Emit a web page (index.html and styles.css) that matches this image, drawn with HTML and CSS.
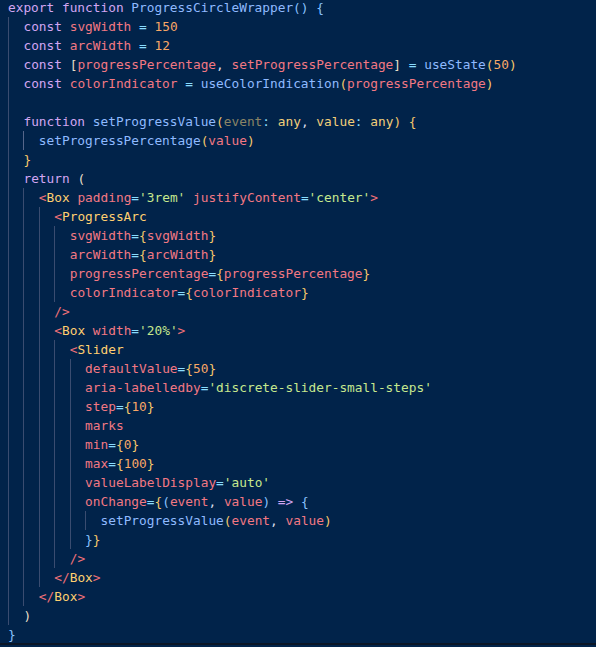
FILE: index.html
```html
<!DOCTYPE html>
<html>
<head>
<meta charset="utf-8">
<link rel="stylesheet" href="styles.css">
</head>
<body>
<div class="editor">
<div class="code">
<div class="line"><span class="k">export</span> <span class="k">function</span> <span class="f">ProgressCircleWrapper</span><span class="bl">()</span> <span class="bl">{</span></div>
<div class="line"><span class="i">  </span><span class="k">const</span> <span class="v">svgWidth</span> <span class="o">=</span> <span class="n">150</span></div>
<div class="line"><span class="i">  </span><span class="k">const</span> <span class="v">arcWidth</span> <span class="o">=</span> <span class="n">12</span></div>
<div class="line"><span class="i">  </span><span class="k">const</span> <span class="w">[</span><span class="v">progressPercentage</span><span class="d">,</span> <span class="v">setProgressPercentage</span><span class="w">]</span> <span class="o">=</span> <span class="f">useState</span><span class="g">(</span><span class="n">50</span><span class="g">)</span></div>
<div class="line"><span class="i">  </span><span class="k">const</span> <span class="v">colorIndicator</span> <span class="o">=</span> <span class="f">useColorIndication</span><span class="g">(</span><span class="v">progressPercentage</span><span class="g">)</span></div>
<div class="line"><span class="i">  </span></div>
<div class="line"><span class="i">  </span><span class="k">function</span> <span class="f">setProgressValue</span><span class="g">(</span><span class="pd">event</span><span class="o">:</span> <span class="ty">any</span><span class="d">,</span> <span class="ty">value</span><span class="o">:</span> <span class="ty">any</span><span class="g">)</span> <span class="g">{</span></div>
<div class="line"><span class="i">  </span><span class="i act">  </span><span class="f">setProgressPercentage</span><span class="g">(</span><span class="v">value</span><span class="g">)</span></div>
<div class="line"><span class="i">  </span><span class="g">}</span></div>
<div class="line"><span class="i">  </span><span class="k">return</span> <span class="w">(</span></div>
<div class="line"><span class="i">  </span><span class="i">  </span><span class="p">&lt;</span><span class="t">Box</span> <span class="v">padding</span><span class="o">=</span><span class="s">'3rem'</span> <span class="v">justifyContent</span><span class="o">=</span><span class="s">'center'</span><span class="p">&gt;</span></div>
<div class="line"><span class="i">  </span><span class="i">  </span><span class="i">  </span><span class="p">&lt;</span><span class="t">ProgressArc</span></div>
<div class="line"><span class="i">  </span><span class="i">  </span><span class="i">  </span><span class="i">  </span><span class="v">svgWidth</span><span class="o">=</span><span class="g">{</span><span class="v">svgWidth</span><span class="g">}</span></div>
<div class="line"><span class="i">  </span><span class="i">  </span><span class="i">  </span><span class="i">  </span><span class="v">arcWidth</span><span class="o">=</span><span class="g">{</span><span class="v">arcWidth</span><span class="g">}</span></div>
<div class="line"><span class="i">  </span><span class="i">  </span><span class="i">  </span><span class="i">  </span><span class="v">progressPercentage</span><span class="o">=</span><span class="g">{</span><span class="v">progressPercentage</span><span class="g">}</span></div>
<div class="line"><span class="i">  </span><span class="i">  </span><span class="i">  </span><span class="i">  </span><span class="v">colorIndicator</span><span class="o">=</span><span class="g">{</span><span class="v">colorIndicator</span><span class="g">}</span></div>
<div class="line"><span class="i">  </span><span class="i">  </span><span class="i">  </span><span class="p">/&gt;</span></div>
<div class="line"><span class="i">  </span><span class="i">  </span><span class="i">  </span><span class="p">&lt;</span><span class="t">Box</span> <span class="v">width</span><span class="o">=</span><span class="s">'20%'</span><span class="p">&gt;</span></div>
<div class="line"><span class="i">  </span><span class="i">  </span><span class="i">  </span><span class="i">  </span><span class="p">&lt;</span><span class="t">Slider</span></div>
<div class="line"><span class="i">  </span><span class="i">  </span><span class="i">  </span><span class="i">  </span><span class="i">  </span><span class="v">defaultValue</span><span class="o">=</span><span class="g">{</span><span class="n">50</span><span class="g">}</span></div>
<div class="line"><span class="i">  </span><span class="i">  </span><span class="i">  </span><span class="i">  </span><span class="i">  </span><span class="v">aria-labelledby</span><span class="o">=</span><span class="s">'discrete-slider-small-steps'</span></div>
<div class="line"><span class="i">  </span><span class="i">  </span><span class="i">  </span><span class="i">  </span><span class="i">  </span><span class="v">step</span><span class="o">=</span><span class="g">{</span><span class="n">10</span><span class="g">}</span></div>
<div class="line"><span class="i">  </span><span class="i">  </span><span class="i">  </span><span class="i">  </span><span class="i">  </span><span class="v">marks</span></div>
<div class="line"><span class="i">  </span><span class="i">  </span><span class="i">  </span><span class="i">  </span><span class="i">  </span><span class="v">min</span><span class="o">=</span><span class="g">{</span><span class="n">0</span><span class="g">}</span></div>
<div class="line"><span class="i">  </span><span class="i">  </span><span class="i">  </span><span class="i">  </span><span class="i">  </span><span class="v">max</span><span class="o">=</span><span class="g">{</span><span class="n">100</span><span class="g">}</span></div>
<div class="line"><span class="i">  </span><span class="i">  </span><span class="i">  </span><span class="i">  </span><span class="i">  </span><span class="v">valueLabelDisplay</span><span class="o">=</span><span class="s">'auto'</span></div>
<div class="line"><span class="i">  </span><span class="i">  </span><span class="i">  </span><span class="i">  </span><span class="i">  </span><span class="v">onChange</span><span class="o">=</span><span class="g">{</span><span class="bl">(</span><span class="v">event</span><span class="d">,</span> <span class="v">value</span><span class="bl">)</span> <span class="k">=&gt;</span> <span class="bl">{</span></div>
<div class="line"><span class="i">  </span><span class="i">  </span><span class="i">  </span><span class="i">  </span><span class="i">  </span><span class="i">  </span><span class="f">setProgressValue</span><span class="g">(</span><span class="v">event</span><span class="d">,</span> <span class="v">value</span><span class="g">)</span></div>
<div class="line"><span class="i">  </span><span class="i">  </span><span class="i">  </span><span class="i">  </span><span class="i">  </span><span class="bl">}</span><span class="g">}</span></div>
<div class="line"><span class="i">  </span><span class="i">  </span><span class="i">  </span><span class="i">  </span><span class="p">/&gt;</span></div>
<div class="line"><span class="i">  </span><span class="i">  </span><span class="i">  </span><span class="p">&lt;/</span><span class="t">Box</span><span class="p">&gt;</span></div>
<div class="line"><span class="i">  </span><span class="i">  </span><span class="p">&lt;/</span><span class="t">Box</span><span class="p">&gt;</span></div>
<div class="line"><span class="i">  </span><span class="w">)</span></div>
<div class="line"><span class="bl">}</span></div>
</div>
</div>
</body>
</html>
```

FILE: styles.css
```css
html, body {
  margin: 0;
  padding: 0;
  background: #01234a;
  overflow: hidden;
}

.editor {
  width: 596px;
  height: 645px;
  background: #01234a;
  border-bottom: 2px solid #0b1626;
}

.code {
  padding: 0 0 0 8px;
  margin-top: -2px;
  font-family: "DejaVu Sans Mono", "Liberation Mono", monospace;
  font-size: 12.8px;
  line-height: 19px;
  color: #d6deeb;
}

.line {
  height: 19px;
  white-space: pre;
}

.i {
  display: inline-block;
  height: 19px;
  vertical-align: top;
  background-image: linear-gradient(to right, #3a4c70 1px, transparent 1px);
}

.i.act {
  background-image: linear-gradient(to right, #56668a 1px, transparent 1px);
}

.k { color: #d2a6f2; }
.f { color: #8fbaff; }
.v { color: #f27883; }
.n { color: #f9a766; }
.o { color: #89ddff; }
.s { color: #c6e88e; }
.t { color: #ffcf70; }
.p { color: #f07178; }
.g { color: #f7c86b; }
.bl { color: #89c2ff; }
.w { color: #e8dfc8; }
.d { color: #d6deeb; }
.ty { color: #f2cf7a; }
.pd { color: #8b8566; }
```
